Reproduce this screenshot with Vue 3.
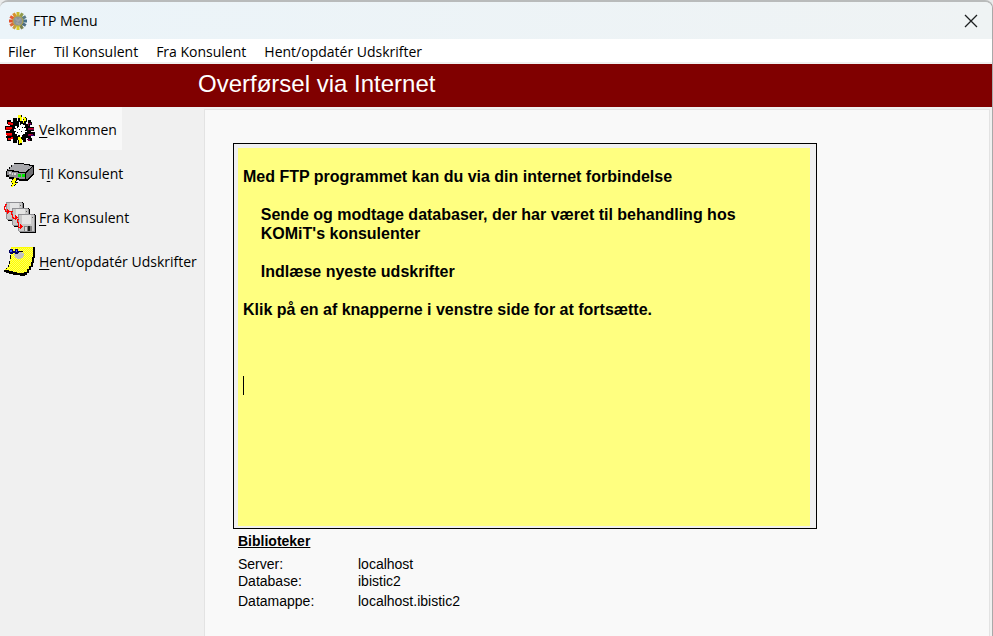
<template>
  <div class="window">
    <header class="titlebar">
      <svg class="app-icon" viewBox="0 0 20 20" aria-hidden="true">
        <line
          v-for="t in appTeeth"
          :key="t.angle"
          x1="10" y1="1" x2="10" y2="6"
          :stroke="t.color"
          stroke-width="3"
          :transform="`rotate(${t.angle} 10 10)`"
        />
        <circle cx="10" cy="10" r="5" fill="#8d9398" stroke="#b8ac45" />
        <path d="M7 8h2v2h2V8h2M8 12h2v1h2" fill="none" stroke="#a8aaa8" />
      </svg>
      <h1 class="window-title">FTP Menu</h1>
      <button class="close-btn" aria-label="Luk">
        <svg viewBox="0 0 14 14" aria-hidden="true">
          <path d="M1 1l12 12M13 1L1 13" fill="none" stroke="#1c1f20" stroke-width="1.3" />
        </svg>
      </button>
    </header>

    <nav class="menubar">
      <button v-for="m in menus" :key="m" class="menu-item">{{ m }}</button>
    </nav>

    <div class="banner">
      <h2>Overførsel via Internet</h2>
    </div>

    <div class="body">
      <aside class="sidebar">
        <button
          v-for="item in items"
          :key="item.id"
          class="side-btn"
          :class="{ active: active === item.id }"
          @click="active = item.id"
        >
          <svg class="side-icon" viewBox="0 0 36 40" shape-rendering="crispEdges" aria-hidden="true">
            <!-- tandhjul -->
            <g v-if="item.id === 'velkommen'">
              <path d="M18 5h4v6h1V7h3v1h1v4h-1v2h2v-4h3v2h1v3h-2v2h4v4h-3v1h4v4h-4v2h1v3h-4v-3h-2v4h-3v-2h-1v5h-4v-5h-1v3h-4v-5h-2v3h-4v-3h-1v-2h2v-1H6v-4h4v-1H5v-4h5v-2H7v-4h4v2h2V8h4v3h1z" fill="#000" />
              <path d="M18 5h3v2h1v4h-2V8h-2zM23 7h2v1h1v3h-2v2h-1v-3h1V9h-1z" fill="#ff0" />
              <path d="M8 12h3v1h2v2h-3v-1H8zM6 17h6v2H6zM6 23h6v2H6zM8 28h3v-1h2v2h-2v1H8z" fill="#f00" />
              <path d="M8 14h3v1H8zM5 19h6v1H5zM7 25h5v1H7z" fill="#a00000" />
              <path d="M28 13h3v1h-2v2h-1zM28 18h6v2h-6zM28 24h5v2h-5zM27 29h3v2h-2z" fill="#800040" />
              <path d="M30 18h3v1h-3zM29 24h2v1h-2z" fill="#d00020" />
              <path d="M31 25h3v1h-3zM30 14h1v1h-1zM29 29h1v1h-1z" fill="#400080" />
              <path d="M19 12h1v3h1v-1h2v1h2v2h-1v1h2v2h-1v1h2v1h-2v2h-2v1h-1v2h-2v-2h-2v1h-1v-2h-2v-2h1v-1h-2v-2h2v-1h-1v-2h2v1h2z" fill="#fff" />
              <path d="M17 17h1v1h-1zM22 17h1v1h-1zM19 19h1v1h-1zM21 21h1v1h-1zM17 22h1v1h-1z" fill="#000" />
              <path d="M18 27h3v2h1v4h-2v1h-1v-4h-1z" fill="#ff0" />
            </g>
            <!-- modem -->
            <g v-else-if="item.id === 'til'">
              <path d="M14 9h10v1h6v1h4v9l-3 3-3 4H19v-1h-5v-1H9v-2H6v-6h1v-2h2v-2h2v-2h3z" fill="#000" />
              <path d="M14 10h10v1h5v1h4l-8 6h-6v-1h-5v-1H8v-1h2v-2h2v-2h2z" fill="#a8a8ac" />
              <path d="M7 17h5v1h6v1h7v6h-6v-1h-5v-1H9v-2H7z" fill="#909094" />
              <path d="M26 19l7-6v6l-4 4-2 2h-1z" fill="#707074" />
              <path d="M9 18h2v2H9zM12 19h1v2h-1zM14 19h2v2h-2z" fill="#d8d8d8" />
              <path d="M18 20h3v3h-3zM22 20h3v3h-3z" fill="#00e800" />
              <path d="M14 24h3v3h-1v1h2v1h-1v1h-1v1h-1v1h-2v1h-2v-2h1v-3h-1v-1h1v-2h2z" fill="#000" />
              <path d="M14 24h2v3h-1v2h2v1h-2v1h-1v1h-1v1h-2v-1h1v-2h1v-1h-2v-1h1v-2h1z" fill="#ff0" />
            </g>
            <!-- disketter -->
            <g v-else-if="item.id === 'fra'">
              <g v-for="d in disks" :key="d.x" :transform="`translate(${d.x} ${d.y})`">
                <path d="M1 0h16v1h1v18H2v-1H1z" fill="#000" />
                <path d="M0 0h16v1h1v17H1v-1H0z" fill="#909094" />
                <path d="M1 1h15v16H1z" fill="#c8c8c8" />
                <path d="M4 1h9v9H4z" fill="#e4e4e4" />
                <path d="M6 12h8v5H6z" fill="#808080" />
                <path d="M10 12h2v5h-2z" fill="#202020" />
                <path d="M7 13h2v4H7z" fill="#d8d8d8" />
                <path d="M14 3h1v1h-1z" fill="#606060" />
              </g>
              <path d="M7 6H5v2H4v3h1v2h3M13 13h-2v3h1v3h1v1h3M19 21h-2v3h1v5h3" fill="none" stroke="#f00" />
              <path d="M7 11h1v1h1v1h2v1H9v1H8v1H7zM15 17h1v1h1v1h1v1h-1v1h-1v1h-1zM20 26h1v1h1v1h1v1h-1v1h-1v1h-1z" fill="#f00" />
            </g>
            <!-- gul seddel -->
            <g v-else>
              <path d="M11 5h24v11h-1v5h-1v4h-2v3h-2v3h-2v2h-2v1h-5v-1h-7v-1H9v-1H6v-1H4v-2h2v-2h2v-3h1v-4h1v-6h1z" fill="#000" />
              <path d="M11 5h22v10h-1v5h-1v4h-2v3h-2v3h-3v1h-7v-1h-4v-1H9v-1H5v-1h2v-2h2v-3h1v-5h1z" fill="#ff0" />
              <path d="M11 6h22v9h-1v5h-1v4h-2v3h-2v3h-3v1h-7v-1h-4v-1H9v-1H6v-1h1v-2h2v-3h1v-5h1z" fill="url(#note-dither)" />
              <path d="M17 9h5v2h2v3h-1v2h-2v1h-4v-1h-2v-2h-1v-2h3z" fill="#c0c0c0" />
              <path d="M10 7h3v2h2V7h3v2h5v1h-4v1h-1v1h-3v-1h-2v1h-3v-1H9V8h1z" fill="#000060" />
              <path d="M10 8h2v2h-2zM16 8h1v2h-1z" fill="#4a5cff" />
              <path d="M19 9h4v1h-4z" fill="#000" />
            </g>
            <defs v-if="item.id === 'hent'">
              <pattern id="note-dither" width="2" height="2" patternUnits="userSpaceOnUse">
                <path d="M0 0h1v1H0zM1 1h1v1H1z" fill="#ffff60" />
              </pattern>
            </defs>
          </svg>
          <span class="side-label">{{ item.pre }}<u>{{ item.key }}</u>{{ item.post }}</span>
        </button>
      </aside>

      <main class="panel">
        <div class="note-frame">
          <textarea v-model="message" class="note" aria-label="Velkomst" spellcheck="false"></textarea>
          <span class="caret"></span>
        </div>
        <section class="info">
          <h3>Biblioteker</h3>
          <dl>
            <template v-for="row in info" :key="row.label">
              <dt>{{ row.label }}</dt>
              <dd>{{ row.value }}</dd>
            </template>
          </dl>
        </section>
      </main>
    </div>
  </div>
</template>

<script setup>
import { ref } from 'vue'

const active = ref('velkommen')

const menus = ['Filer', 'Til Konsulent', 'Fra Konsulent', 'Hent/opdatér Udskrifter']

// key = genvejstast, vises understreget
const items = [
  { id: 'velkommen', pre: '', key: 'V', post: 'elkommen' },
  { id: 'til', pre: 'T', key: 'i', post: 'l Konsulent' },
  { id: 'fra', pre: '', key: 'F', post: 'ra Konsulent' },
  { id: 'hent', pre: '', key: 'H', post: 'ent/opdatér Udskrifter' },
]

const message = ref([
  '',
  'Med FTP programmet kan du via din internet forbindelse',
  '',
  '    Sende og modtage databaser, der har været til behandling hos',
  "    KOMiT's konsulenter",
  '',
  '    Indlæse nyeste udskrifter',
  '',
  'Klik på en af knapperne i venstre side for at fortsætte.',
  '',
  '',
  '',
  '',
].join('\n'))

const info = [
  { label: 'Server:', value: 'localhost' },
  { label: 'Database:', value: 'ibistic2' },
  { label: 'Datamappe:', value: 'localhost.ibistic2' },
]

const appColors = ['#c9b92c', '#8f9a4c', '#5d7c86', '#47708a', '#4d6c80', '#79804f', '#d8cc28', '#c79a3c', '#d86a3a', '#e2502c', '#e85a34', '#d9902c']
const appTeeth = appColors.map((color, i) => ({ color, angle: i * 30 }))

const disks = [
  { x: 6, y: 4 },
  { x: 12, y: 10 },
  { x: 18, y: 16 },
]
</script>

<style>
body {
  margin: 0;
  background: #e9ebeb;
}
</style>

<style scoped>
.window {
  box-sizing: border-box;
  min-height: 100vh;
  display: flex;
  flex-direction: column;
  border-top: 2px solid #b9bbbb;
  border-right: 1px solid #a9a9a9;
  border-radius: 8px 8px 0 0;
  background: #f0f0f0;
  overflow: hidden;
  font-family: 'Open Sans', 'Noto Sans', sans-serif;
  font-size: 14px;
  color: #000;
}

button {
  border: none;
  background: none;
  font: inherit;
  color: inherit;
  padding: 0;
}

.titlebar {
  display: flex;
  align-items: center;
  height: 37px;
  padding: 0 14px 0 8px;
  background: linear-gradient(90deg, #ebf4f9, #eff3f4);
}
.app-icon {
  width: 20px;
  height: 20px;
}
.window-title {
  flex: 1;
  margin: 0 0 0 5px;
  font-size: 14px;
  font-weight: 400;
  line-height: 20px;
}
.close-btn {
  display: flex;
}
.close-btn svg {
  width: 14px;
  height: 14px;
}

.menubar {
  display: flex;
  gap: 18px;
  height: 23px;
  padding: 0 8px;
  background: #fff;
  border-bottom: 2px solid #f0f0f0;
}
.menu-item {
  line-height: 25px;
  white-space: nowrap;
}

.banner {
  height: 43px;
  padding-left: 198px;
  background: #800000;
}
.banner h2 {
  margin: 0;
  font-family: 'Liberation Sans', Arial, sans-serif;
  font-size: 24px;
  font-weight: 400;
  line-height: 40px;
  color: #fff;
}

.body {
  flex: 1;
  display: flex;
}

.sidebar {
  width: 204px;
  flex-shrink: 0;
  display: flex;
  flex-direction: column;
  align-items: flex-start;
  gap: 1px;
}
.side-btn {
  display: flex;
  align-items: center;
  gap: 3px;
  padding: 3px 5px 0 0;
  white-space: nowrap;
}
.side-btn.active {
  background: #f8f8f8;
}
.side-icon {
  width: 36px;
  height: 40px;
}
.side-label {
  padding-bottom: 2px;
}
.side-label u {
  text-underline-offset: 2px;
}

.panel {
  flex: 1;
  min-width: 0;
  margin: 2px 2px 0 0;
  padding: 33px 28px 24px;
  border: 1px solid #e3e3e3;
  border-bottom: none;
  background: #f9f9f9;
  font-family: 'Liberation Sans', Arial, sans-serif;
}

.note-frame {
  position: relative;
  box-sizing: border-box;
  width: 584px;
  max-width: 100%;
  padding: 4px 6px 2px 4px;
  border: 1px solid #000;
  background: #f0f0f0;
}
.note {
  display: block;
  box-sizing: border-box;
  width: 100%;
  height: 378px;
  padding: 0 5px;
  border: none;
  outline: none;
  resize: none;
  overflow: hidden;
  background: #ffff80;
  color: #000;
  font-family: 'Liberation Sans', Arial, sans-serif;
  font-size: 16px;
  font-weight: 700;
  line-height: 19px;
}
.caret {
  position: absolute;
  left: 9px;
  top: 232px;
  width: 1px;
  height: 19px;
  background: #000;
}
.note:focus + .caret { display: none; }

.info {
  padding: 3px 5px 0;
}
.info h3 {
  margin: 0 0 6px;
  font-size: 14px;
  font-weight: 700;
  line-height: 18px;
  text-decoration: underline;
}
.info dl {
  display: grid;
  grid-template-columns: 120px 1fr;
  margin: 0;
  font-size: 14px;
  line-height: 17px;
}
.info dt,
.info dd {
  margin: 0;
}
.info dt:last-of-type,
.info dd:last-of-type {
  margin-top: 3px;
}
</style>
